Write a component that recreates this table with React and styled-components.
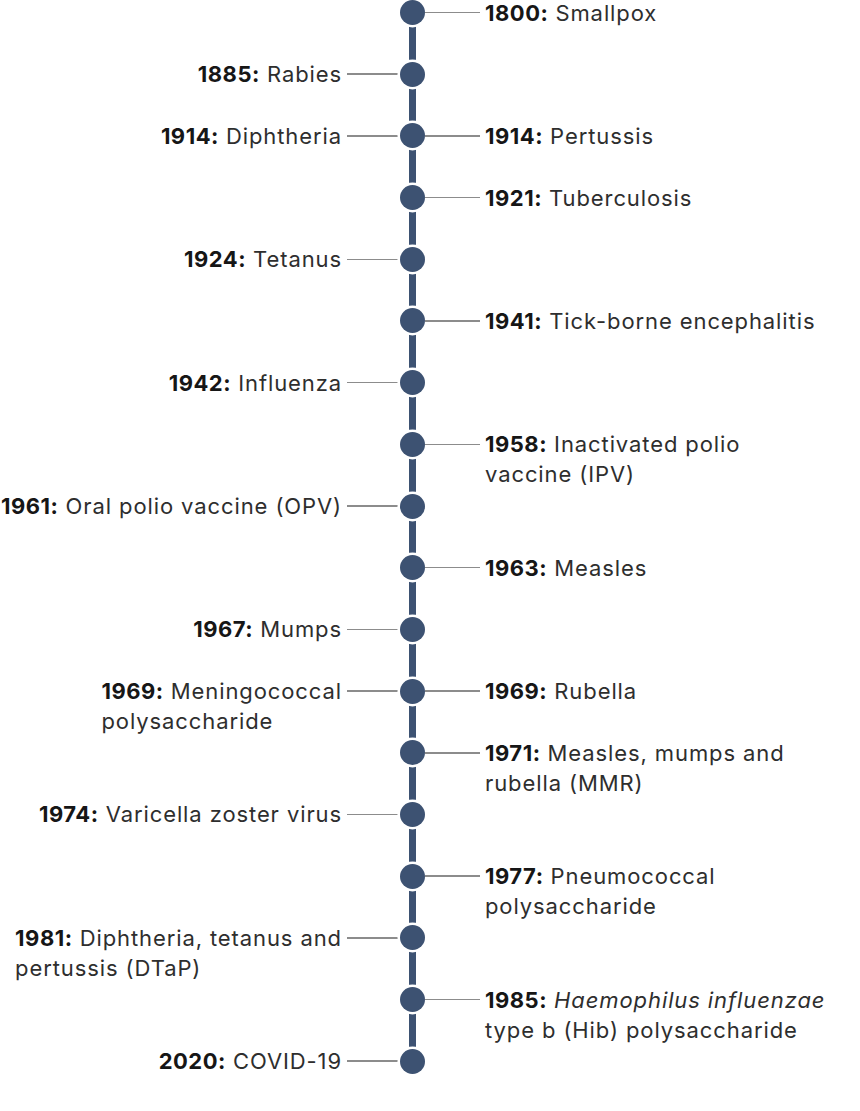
import styled, { createGlobalStyle } from "styled-components";

const GlobalStyle = createGlobalStyle`
  html, body {
    margin: 0;
    padding: 0;
    background: #ffffff;
  }
  body {
    font-family: Inter, "Liberation Sans", sans-serif;
    color: #2b2b2b;
  }
`;

const ROW_HEIGHT = 61.7;
const DOT_CENTER = 12.5;

const events = [
  { right: { year: "1800", text: "Smallpox" } },
  { left: { year: "1885", text: "Rabies" } },
  {
    left: { year: "1914", text: "Diphtheria" },
    right: { year: "1914", text: "Pertussis" },
  },
  { right: { year: "1921", text: "Tuberculosis" } },
  { left: { year: "1924", text: "Tetanus" } },
  { right: { year: "1941", text: "Tick-borne encephalitis" } },
  { left: { year: "1942", text: "Influenza" } },
  { right: { year: "1958", text: ["Inactivated polio", "vaccine (IPV)"] } },
  { left: { year: "1961", text: "Oral polio vaccine (OPV)" } },
  { right: { year: "1963", text: "Measles" } },
  { left: { year: "1967", text: "Mumps" } },
  {
    left: { year: "1969", text: ["Meningococcal", "polysaccharide"] },
    right: { year: "1969", text: "Rubella" },
  },
  { right: { year: "1971", text: ["Measles, mumps and", "rubella (MMR)"] } },
  { left: { year: "1974", text: "Varicella zoster virus" } },
  { right: { year: "1977", text: ["Pneumococcal", "polysaccharide"] } },
  {
    left: { year: "1981", text: ["Diphtheria, tetanus and", "pertussis (DTaP)"] },
  },
  {
    right: {
      year: "1985",
      text: [<em key="h">Haemophilus influenzae</em>, "type b (Hib) polysaccharide"],
    },
  },
  { left: { year: "2020", text: "COVID-19" } },
];

const Timeline = styled.main`
  display: flex;
  flex-direction: column;
  width: 860px;
  height: 1111px;
  overflow: hidden;
`;

const Row = styled.div`
  display: grid;
  grid-template-columns: 400px 25px 1fr;
  height: ${ROW_HEIGHT}px;
  flex: none;
`;

const Side = styled.div`
  display: flex;
  align-items: flex-start;
  justify-content: ${(p) => (p.$left ? "flex-end" : "flex-start")};
`;

const DotCell = styled.div`
  display: flex;
  justify-content: center;
  align-items: flex-start;
  background-image: linear-gradient(#3d5272, #3d5272);
  background-repeat: no-repeat;
  background-size: 7px
    ${(p) => (p.$first || p.$last ? `${p.$first ? ROW_HEIGHT - DOT_CENTER : DOT_CENTER}px` : "100%")};
  background-position: 9px ${(p) => (p.$first ? `${DOT_CENTER}px` : "0")};
`;

const Dot = styled.span`
  width: 25px;
  height: 25px;
  border-radius: 50%;
  background: #3d5272;
  box-shadow: 0 0 0 2.5px #ffffff;
`;

const Connector = styled.span`
  flex: none;
  height: 1.5px;
  margin-top: ${DOT_CENTER - 0.75}px;
  background: #8c8c8c;
  width: ${(p) => (p.$left ? "51px" : "55px")};
  margin-left: ${(p) => (p.$left ? "5px" : "0")};
  margin-right: ${(p) => (p.$left ? "2px" : "5px")};
`;

const Label = styled.p`
  margin: ${DOT_CENTER - 15}px 0 0;
  font-size: 22px;
  line-height: 30px;
  letter-spacing: 0.9px;
  white-space: nowrap;
  text-align: left;
  color: #2e2e2e;

  em {
    font-style: italic;
  }
`;

const Year = styled.strong`
  font-weight: 700;
  letter-spacing: 0.5px;
  color: #161616;
`;

const EventLabel = ({ year, text }) => {
  const lines = Array.isArray(text) ? text : [text];
  return (
    <Label>
      <Year>{year}:</Year>{" "}
      {lines.map((line, i) => (
        <span key={i}>
          {i > 0 && <br />}
          {line}
        </span>
      ))}
    </Label>
  );
};

const App = () => {
  return (
    <>
      <GlobalStyle />
      <Timeline>
        {events.map((ev, i) => (
          <Row key={i}>
            <Side $left>
              {ev.left && (
                <>
                  <EventLabel {...ev.left} />
                  <Connector $left />
                </>
              )}
            </Side>
            <DotCell $first={i === 0} $last={i === events.length - 1}>
              <Dot />
            </DotCell>
            <Side>
              {ev.right && (
                <>
                  <Connector />
                  <EventLabel {...ev.right} />
                </>
              )}
            </Side>
          </Row>
        ))}
      </Timeline>
    </>
  );
};

export default App;
